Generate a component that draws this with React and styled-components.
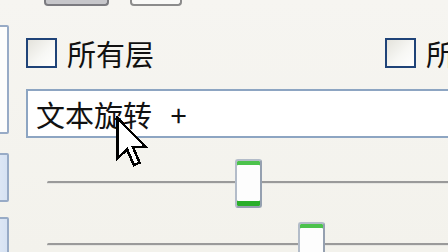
import styled, { createGlobalStyle } from "styled-components";

const Global = createGlobalStyle`
  html, body {
    margin: 0;
    padding: 0;
    background: #f4f3ee;
  }
`

const cjk = `"Noto Sans CJK SC", "Noto Sans", sans-serif`

export default function App() {
  return (
    <Page>
      <Global />
      <Side>
        <SideBox $top={25} $height={109} />
        <SideBox $top={19} $height={49} $tinted />
        <SideBox $top={15} $height={60} $tinted />
      </Side>
      <Main>
        <TopBar>
          <TopButton $dark $width={65} $offset={18} />
          <TopButton $width={52} $offset={21} />
        </TopBar>
        <CheckRow>
          <CheckItem>
            <CheckBox />
            <Label>所有层</Label>
          </CheckItem>
          <CheckItem>
            <CheckBox />
            <Label>所有层</Label>
          </CheckItem>
        </CheckRow>
        <TextField>文本旋转 +</TextField>
        <Sliders>
          <Slider>
            <Track />
            <Thumb style={{ left: 188 }} $top={8} />
          </Slider>
          <Slider>
            <Track />
            <Thumb style={{ left: 251 }} $top={9} />
          </Slider>
        </Sliders>
      </Main>
      <Cursor width="32" height="53" viewBox="0 0 12.4 20">
        <path
          d="M0.6 0.6 L0.6 16.2 L4.3 12.6 L6.9 18.8 L9.1 17.8 L6.6 11.8 L11.6 11.8 Z"
          fill="#fff"
          stroke="#000"
          strokeWidth="1"
          strokeLinejoin="miter"
        />
      </Cursor>
    </Page>
  )
}

const Page = styled.div`
  position: relative;
  display: flex;
  width: 448px;
  height: 252px;
  overflow: hidden;
  background: linear-gradient(180deg, #f6f5f1 0%, #f3f2ec 100%);
  font-family: ${cjk};
`

const Side = styled.div`
  width: 9px;
  flex-shrink: 0;
  display: flex;
  flex-direction: column;
  overflow: hidden;
`

const SideBox = styled.div`
  box-sizing: border-box;
  flex-shrink: 0;
  width: 30px;
  margin-left: -21px;
  margin-top: ${p => p.$top}px;
  height: ${p => p.$height}px;
  border: 2px solid #98abc6;
  border-radius: 2px;
  background: ${p => p.$tinted
    ? "linear-gradient(90deg, #eef3fa 0%, #d6e2f3 100%)"
    : "#fdfdfc"};
`

const Main = styled.div`
  flex: 1;
  min-width: 0;
  padding-left: 17px;
  overflow: hidden;
  display: flex;
  flex-direction: column;
`

const TopBar = styled.div`
  display: flex;
  height: 6px;
`

const TopButton = styled.div`
  box-sizing: border-box;
  width: ${p => p.$width}px;
  height: 6px;
  margin-left: ${p => p.$offset}px;
  border: 2px solid ${p => p.$dark ? "#7b7b80" : "#8c8c8c"};
  border-top: none;
  border-radius: 0 0 4px 4px;
  background: ${p => p.$dark ? "#c6c6ca" : "#f9f9f7"};
`

const CheckRow = styled.div`
  display: grid;
  grid-template-columns: 359px auto;
  margin-top: 32px;
  height: 30px;
`

const CheckItem = styled.label`
  display: flex;
  align-items: center;
  gap: 10px;
  white-space: nowrap;
`

const CheckBox = styled.span`
  box-sizing: border-box;
  width: 31px;
  height: 30px;
  flex-shrink: 0;
  border: 2px solid #1f4378;
  background: linear-gradient(135deg, #e4e3dc 0%, #f7f7f4 55%, #ffffff 100%);
`

const Label = styled.span`
  font-size: 29px;
  line-height: 30px;
  color: #111;
`

const TextField = styled.div`
  box-sizing: border-box;
  display: flex;
  align-items: center;
  flex-shrink: 0;
  width: 600px;
  height: 49px;
  margin-top: 21px;
  padding-left: 8px;
  border: 2px solid #8da5c2;
  background: #fff;
  font-size: 29px;
  color: #111;
  white-space: pre;
  word-spacing: 12px;
`

const Sliders = styled.div`
  display: flex;
  flex-direction: column;
  margin-top: 13px;
  margin-left: 21px;
`

const Slider = styled.div`
  position: relative;
  flex-shrink: 0;
  height: 62px;
`

const Track = styled.div`
  position: absolute;
  left: 0;
  right: -40px;
  top: 30px;
  height: 2px;
  border-radius: 2px 0 0 2px;
  background: #9a9a9a;
  border-bottom: 1px solid #e6e6e2;
`

const Thumb = styled.div`
  position: absolute;
  top: ${p => p.$top}px;
  box-sizing: border-box;
  width: 27px;
  height: 49px;
  border: 2px solid #b3bcc9;
  border-right-color: #95a0b0;
  border-bottom-color: #95a0b0;
  border-radius: 3px;
  background: #fdfdfd;
  box-shadow: inset 0 4px 0 #4cc24c, inset 0 -5px 0 #2aae2a;
`

const Cursor = styled.svg`
  position: absolute;
  left: 116px;
  top: 116px;
  shape-rendering: crispEdges;
`
